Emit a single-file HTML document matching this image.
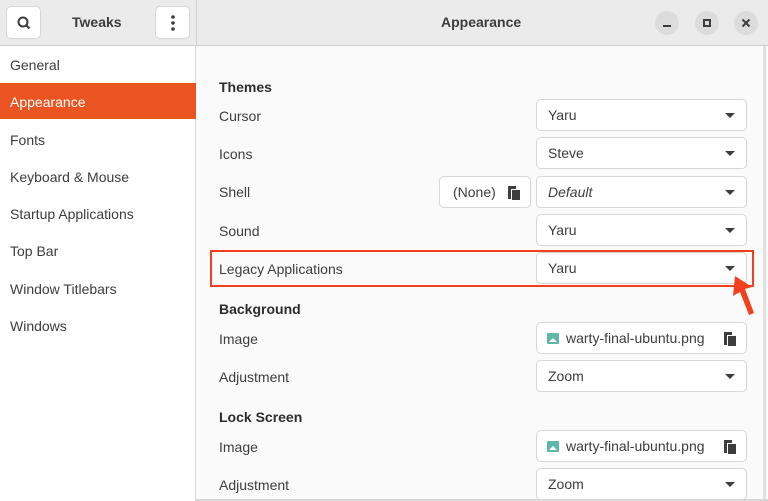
<!DOCTYPE html>
<html><head><style>
*{box-sizing:border-box;margin:0;padding:0}
body{width:768px;height:501px;overflow:hidden;background:#fafafa;font-family:"Liberation Sans",sans-serif;font-size:14px;color:#3d3d3d;position:relative}
.a{position:absolute}
.hdr{left:0;top:0;width:768px;height:46px;background:#ebebeb;border-bottom:1px solid #cdcdcd}
.side{left:0;top:46px;width:196px;height:455px;background:#fff;border-right:1px solid #d8d8d8}
.vsep{left:196px;top:0;width:1px;height:46px;background:#d2d2d2}
.btn{background:#fff;border:1px solid #d6d6d6;border-radius:5px}
.si{position:absolute;left:10px;font-size:14px;color:#3d3d3d}
.lbl{position:absolute;left:219px;font-size:14px;color:#3d3d3d}
.h{position:absolute;left:219px;font-weight:bold;font-size:14px;color:#2d2d2d}
.cb{position:absolute;left:536px;width:211px;height:32px;background:#fff;border:1px solid #d6d6d6;border-radius:5px;padding-left:11px;line-height:30px;color:#3d3d3d}
.cb:after{content:"";position:absolute;right:11px;top:13px;border-left:5px solid transparent;border-right:5px solid transparent;border-top:5px solid #3d3d3d}
.fb{position:absolute;left:536px;width:211px;height:32px;background:#fff;border:1px solid #d6d6d6;border-radius:5px;padding-left:29px;line-height:30px;color:#3d3d3d}
.pic{position:absolute;left:10px;top:10px;width:12px;height:11px;background:#5db8a8;border-radius:1px}
.pic:after{content:"";position:absolute;left:2px;top:5px;border-left:4px solid transparent;border-right:4px solid transparent;border-bottom:4px solid #fff}
.doc{position:absolute;right:10px;top:8px;width:13px;height:15px}
.wb{position:absolute;top:11px;width:24px;height:24px;border-radius:12px;background:#dcdcdc}
</style></head><body>
<div class="a hdr"></div>
<div class="a vsep"></div>
<div class="a btn" style="left:6px;top:6px;width:35px;height:33px"><svg width="35" height="33" viewBox="0 0 35 33"><circle cx="16" cy="15" r="4.5" fill="none" stroke="#3d3d3d" stroke-width="2"/><line x1="19" y1="18" x2="22.5" y2="21.5" stroke="#3d3d3d" stroke-width="2.2"/></svg></div>
<div class="a" style="left:72px;top:14px;font-weight:bold;color:#3d3d3d">Tweaks</div>
<div class="a btn" style="left:155px;top:6px;width:35px;height:33px"><svg width="35" height="33"><circle cx="17" cy="10" r="1.8" fill="#3d3d3d"/><circle cx="17" cy="16" r="1.8" fill="#3d3d3d"/><circle cx="17" cy="22" r="1.8" fill="#3d3d3d"/></svg></div>
<div class="a" style="left:441px;top:14px;font-weight:bold;color:#3d3d3d">Appearance</div>
<div class="wb" style="left:655px"><div class="a" style="left:8px;top:14px;width:8px;height:2px;background:#3d3d3d"></div></div>
<div class="wb" style="left:695px"><div class="a" style="left:8px;top:8px;width:8px;height:8px;border:2px solid #3d3d3d"></div></div>
<div class="wb" style="left:734px"><svg width="24" height="24"><path d="M8.5 8.5L15.5 15.5M15.5 8.5L8.5 15.5" stroke="#3d3d3d" stroke-width="2"/></svg></div>
<div class="a side"></div>
<div class="a" style="left:0;top:83px;width:196px;height:36px;background:#e95420"></div>
<div class="si" style="top:57px">General</div>
<div class="si" style="top:94px;color:#fff">Appearance</div>
<div class="si" style="top:132px">Fonts</div>
<div class="si" style="top:169px">Keyboard &amp; Mouse</div>
<div class="si" style="top:206px">Startup Applications</div>
<div class="si" style="top:243px">Top Bar</div>
<div class="si" style="top:281px">Window Titlebars</div>
<div class="si" style="top:318px">Windows</div>
<div class="a" style="left:763px;top:46px;width:3px;height:455px;background:#e0e0e0"></div>
<div class="h" style="top:79px">Themes</div>
<div class="lbl" style="top:108px">Cursor</div><div class="cb" style="top:99px">Yaru</div>
<div class="lbl" style="top:146px">Icons</div><div class="cb" style="top:137px">Steve</div>
<div class="lbl" style="top:184px">Shell</div>
<div class="a btn" style="left:439px;top:176px;width:92px;height:32px;line-height:30px;padding-left:13px;color:#3d3d3d">(None)<svg class="doc" viewBox="0 0 13 15"><path d="M1 1h8v3h-5v10h-3z" fill="#3d3d3d"/><rect x="5" y="5" width="8" height="10" fill="#3d3d3d"/></svg></div>
<div class="cb" style="top:176px;font-style:italic">Default</div>
<div class="lbl" style="top:223px">Sound</div><div class="cb" style="top:214px">Yaru</div>
<div class="lbl" style="top:261px">Legacy Applications</div><div class="cb" style="top:252px">Yaru</div>
<div class="a" style="left:210px;top:250px;width:544px;height:37px;border:2px solid #f2401e"></div>
<svg class="a" style="left:728px;top:272px" width="30" height="48"><path d="M7 4L5 24L12 20L21 43L26 41L17 17L24 15Z" fill="#f2401e"/></svg>
<div class="h" style="top:301px">Background</div>
<div class="lbl" style="top:331px">Image</div>
<div class="fb" style="top:322px"><div class="pic"></div>warty-final-ubuntu.png<svg class="doc" viewBox="0 0 13 15"><path d="M1 1h8v3h-5v10h-3z" fill="#3d3d3d"/><rect x="5" y="5" width="8" height="10" fill="#3d3d3d"/></svg></div>
<div class="lbl" style="top:369px">Adjustment</div><div class="cb" style="top:360px">Zoom</div>
<div class="h" style="top:409px">Lock Screen</div>
<div class="lbl" style="top:439px">Image</div>
<div class="fb" style="top:430px"><div class="pic"></div>warty-final-ubuntu.png<svg class="doc" viewBox="0 0 13 15"><path d="M1 1h8v3h-5v10h-3z" fill="#3d3d3d"/><rect x="5" y="5" width="8" height="10" fill="#3d3d3d"/></svg></div>
<div class="lbl" style="top:477px">Adjustment</div><div class="cb" style="top:468px">Zoom</div>
<div class="a" style="left:196px;top:499px;width:572px;height:2px;background:#d8d8d8"></div>
</body></html>
